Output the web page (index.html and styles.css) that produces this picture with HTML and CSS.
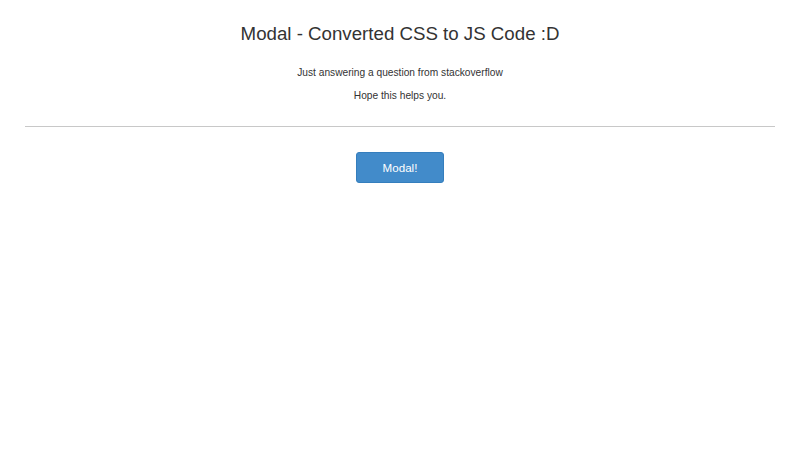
FILE: index.html
```html
<!DOCTYPE html>
<html lang="en">
<head>
    <meta charset="UTF-8">
    <title>Modal</title>
    <link rel="stylesheet" href="styles.css">
</head>
<body>
    <div class="page">
        <div class="intro">
            <h1 class="title">Modal - Converted CSS to JS Code :D</h1>
            <p>Just answering a question from stackoverflow</p>
            <p>Hope this helps you.</p>
        </div>
        <hr class="rule">
        <div class="actions">
            <button class="btn btn-primary" id="open">Modal!</button>
        </div>
    </div>
</body>
</html>
```

FILE: styles.css
```css
* {
    margin: 0;
    padding: 0;
    box-sizing: border-box;
}
body {
    font-family: "Liberation Sans", Arial, sans-serif;
    font-size: 10.2px;
    color: #333;
    background: #fff;
}
.page {
    padding: 0 25px;
}
.intro {
    text-align: center;
    padding-top: 22px;
}
.title {
    font-size: 18.7px;
    font-weight: normal;
    line-height: 24px;
    margin-bottom: 18px;
}
.intro p {
    line-height: 18px;
    margin-bottom: 5px;
}
.rule {
    border: 0;
    border-top: 1px solid #c8c8c8;
    margin-top: 21px;
}
.actions {
    display: flex;
    justify-content: center;
    padding-top: 25px;
}
.btn {
    width: 88px;
    height: 31px;
    font-family: inherit;
    font-size: 11.6px;
    color: #fff;
    border-radius: 3px;
    cursor: pointer;
}
.btn-primary {
    background: #428bca;
    border: 1px solid #357ebd;
}
```
